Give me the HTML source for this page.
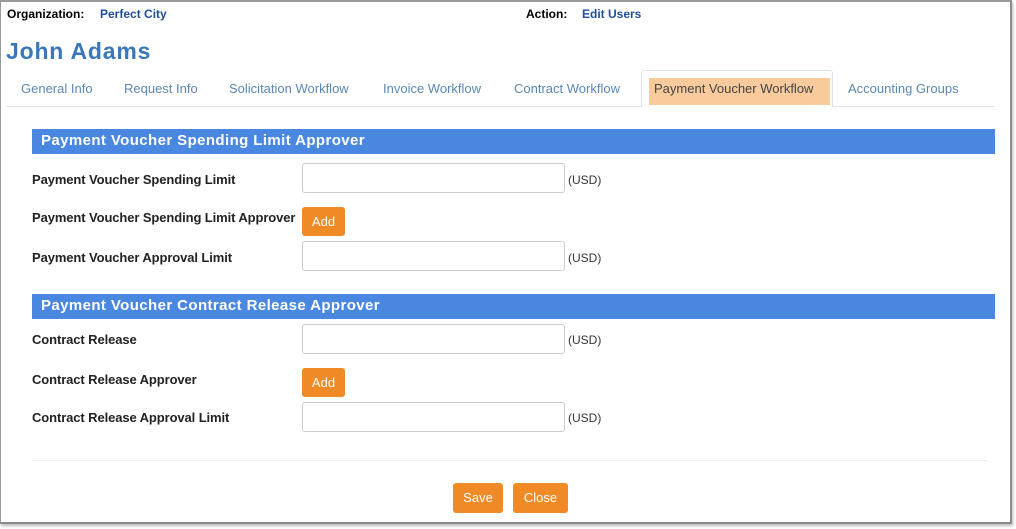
<!DOCTYPE html>
<html><head><style>
*{margin:0;padding:0;box-sizing:border-box}
body{width:1016px;height:529px;background:#fff;position:relative;overflow:hidden;font-family:"Liberation Sans",sans-serif}
.a{position:absolute;white-space:nowrap}
.frame{position:absolute;left:0;top:0;width:1012px;height:524px;border:2px solid #8a8a8a;border-left:1px solid #9a9a9a;border-top:2px solid #9a9a9a;box-shadow:1px 2px 3px #bbb}
.lb{font-size:12px;font-weight:bold;color:#000}
.lk{font-size:12px;font-weight:bold;color:#1f4e99}
.tab{font-size:13px;color:#5b87b5;top:81px}
.hd{left:32px;width:963px;height:25px;background:#4a87e0;color:#fff;font-weight:bold;font-size:15px;letter-spacing:0.4px;padding:3px 0 0 9px}
.l{left:32px;font-size:13px;font-weight:bold;color:#222;letter-spacing:-0.1px}
.in{left:302px;width:263px;height:30px;border:1px solid #ccc;border-radius:3px}
.u{left:568px;font-size:12px;color:#333}
.btn{background:#f08a24;color:#fff;font-size:13px;border-radius:3px;text-align:center}
</style></head><body>
<div class="frame"></div>
<div class="a lb" style="left:7px;top:7px">Organization:</div>
<div class="a lk" style="left:100px;top:7px">Perfect City</div>
<div class="a lb" style="left:526px;top:7px">Action:</div>
<div class="a lk" style="left:582px;top:7px">Edit Users</div>
<div class="a" style="left:6px;top:38px;font-size:23px;font-weight:bold;color:#3a78b8;letter-spacing:0.8px">John Adams</div>
<div class="a" style="left:6px;top:106px;width:989px;height:1px;background:#dde3ea"></div>
<div class="a" style="left:641px;top:70px;width:192px;height:37px;border:1px solid #dde3ea;border-bottom:none;border-radius:3px 3px 0 0;background:#fff"></div>
<div class="a" style="left:649px;top:78px;width:181px;height:27px;background:#f9cb9c"></div>
<div class="a tab" style="left:21px">General Info</div>
<div class="a tab" style="left:124px">Request Info</div>
<div class="a tab" style="left:229px">Solicitation Workflow</div>
<div class="a tab" style="left:383px">Invoice Workflow</div>
<div class="a tab" style="left:514px">Contract Workflow</div>
<div class="a tab" style="left:654px;color:#444">Payment Voucher Workflow</div>
<div class="a tab" style="left:848px">Accounting Groups</div>

<div class="a hd" style="top:129px">Payment Voucher Spending Limit Approver</div>
<div class="a l" style="top:172px">Payment Voucher Spending Limit</div>
<div class="a in" style="top:163px"></div><div class="a u" style="top:173px">(USD)</div>
<div class="a l" style="top:210px">Payment Voucher Spending Limit Approver</div>
<div class="a btn" style="left:302px;top:207px;width:43px;height:29px;line-height:29px">Add</div>
<div class="a l" style="top:250px">Payment Voucher Approval Limit</div>
<div class="a in" style="top:241px"></div><div class="a u" style="top:251px">(USD)</div>

<div class="a hd" style="top:294px">Payment Voucher Contract Release Approver</div>
<div class="a l" style="top:332px">Contract Release</div>
<div class="a in" style="top:324px"></div><div class="a u" style="top:333px">(USD)</div>
<div class="a l" style="top:372px">Contract Release Approver</div>
<div class="a btn" style="left:302px;top:368px;width:43px;height:29px;line-height:29px">Add</div>
<div class="a l" style="top:410px">Contract Release Approval Limit</div>
<div class="a in" style="top:402px"></div><div class="a u" style="top:411px">(USD)</div>

<div class="a" style="left:32px;top:460px;width:956px;height:1px;background:#e8ecf0"></div>
<div class="a btn" style="left:453px;top:483px;width:50px;height:30px;line-height:30px">Save</div>
<div class="a btn" style="left:513px;top:483px;width:55px;height:30px;line-height:30px">Close</div>
</body></html>
